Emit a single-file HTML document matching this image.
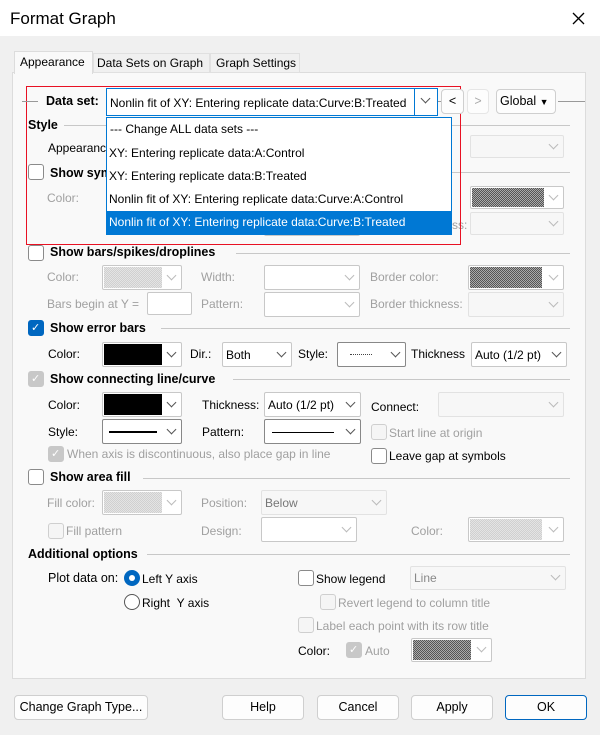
<!DOCTYPE html>
<html><head><style>
*{box-sizing:border-box;margin:0;padding:0}
body{width:600px;height:735px;background:#f0f0f0;font-family:"Liberation Sans",sans-serif;font-size:12px;color:#000;position:relative;overflow:hidden}
div,span{position:absolute}
.t{white-space:nowrap;line-height:14px}
.d{color:#a0a0a0}
.b{font-weight:bold;font-size:12.5px}
.ln{height:1px;background:#c8c8c8}
.cb{width:16px;height:16px;border:1px solid #8a8a8a;border-radius:3px;background:#fff}
.cbd{border-color:#cfcfcf;background:#f5f5f5}
.cbk{background:#0067c0;border-color:#0067c0}
.cbg{background:#c8c8c8;border-color:#c8c8c8}
.ck{left:2px;top:0px;color:#fff;font-size:11px;line-height:14px}
.combo{background:#fff;border:1px solid #c8c8c8;border-radius:2px}
.cdis{background:#f7f7f7;border:1px solid #e2e2e2}
.ar{right:6px;top:50%;margin-top:-6px;width:7px;height:7px;border-right:1px solid #555;border-bottom:1px solid #555;transform:rotate(45deg)}
.ard{border-color:#bbb}
.btn{background:#fdfdfd;border:1px solid #cfcfcf;border-radius:4px;text-align:center;line-height:22px;font-size:12.5px}
.hatch{background:repeating-conic-gradient(#555 0 25%,#aaa 0 50%) 0 0/2px 2px}
.hl{background:repeating-conic-gradient(#e4e4e4 0 25%,#d0d0d0 0 50%) 0 0/2px 2px}
</style></head><body>
<div style="left:0;top:0;width:600px;height:36px;background:#fff"></div>
<div class="t" style="left:10px;top:9px;font-size:17px;line-height:20px">Format Graph</div>
<svg style="position:absolute;left:572px;top:12px" width="13" height="13"><path d="M1 1L12 12M12 1L1 12" stroke="#000" stroke-width="1.3"/></svg>

<div style="left:12px;top:72px;width:574px;height:607px;background:#f9f9f9;border:1px solid #dcdcdc"></div>
<div style="left:14px;top:51px;width:79px;height:23px;background:#f9f9f9;border:1px solid #dcdcdc;border-bottom:none"></div>
<div class="t" style="left:20px;top:55px">Appearance</div>
<div style="left:93px;top:53px;width:117px;height:20px;background:#f0f0f0;border:1px solid #e0e0e0"></div>
<div class="t" style="left:97px;top:56px">Data Sets on Graph</div>
<div style="left:210px;top:53px;width:90px;height:20px;background:#f0f0f0;border:1px solid #e0e0e0"></div>
<div class="t" style="left:216px;top:56px">Graph Settings</div>

<div class="t b" style="left:28px;top:118px">Style</div><div class="ln" style="left:64px;top:125px;width:506px"></div>
<div class="t" style="left:48px;top:141px">Appearance</div>
<div class="combo cdis" style="left:470px;top:135px;width:94px;height:23px"><div class="ar ard"></div></div>
<div class="cb" style="left:28px;top:164px"></div>
<div class="t b" style="left:50px;top:166px">Show sym</div><div class="ln" style="left:452px;top:172px;width:118px"></div>
<div class="t d" style="left:47px;top:191px">Color:</div>
<div class="combo" style="left:470px;top:186px;width:94px;height:23px"><div class="hatch" style="left:1px;top:1px;width:72px;height:19px"></div><div class="ar ard"></div></div>
<div class="t d" style="left:452px;top:218px">ss:</div>
<div class="combo cdis" style="left:470px;top:212px;width:94px;height:23px"><div class="ar ard"></div></div>
<div class="combo" style="left:264px;top:220px;width:96px;height:16px"></div>

<div style="left:26px;top:86px;width:435px;height:159px;border:1.5px solid #e81123"></div>
<div class="ln" style="left:22px;top:101px;width:16px;background:#999"></div>
<div class="t b" style="left:46px;top:94px">Data set:</div>
<div style="left:106px;top:88px;width:332px;height:28px;background:#fff;border:1px solid #0078d4"></div>
<div class="t" style="left:110px;top:96px;width:302px;overflow:hidden">Nonlin fit of XY: Entering replicate data:Curve:B:Treated</div>
<div style="left:414px;top:88px;width:1px;height:28px;background:#0078d4"></div>
<div style="left:422px;top:95px;width:7px;height:7px;border-right:1px solid #555;border-bottom:1px solid #555;transform:rotate(45deg)"></div>
<div class="ln" style="left:438px;top:101px;width:4px;background:#999"></div>
<div class="btn" style="left:441px;top:89px;width:23px;height:25px">&lt;</div>
<div class="btn" style="left:467px;top:89px;width:22px;height:25px;color:#aaa;border-color:#e6e6e6">&gt;</div>
<div class="btn" style="left:496px;top:89px;width:60px;height:25px;text-align:left;padding-left:3px">Global <span style="position:static;font-size:9px">▼</span></div>
<div class="ln" style="left:558px;top:101px;width:27px;background:#999"></div>

<div style="left:106px;top:117px;width:346px;height:118px;background:#fff;border:1px solid #0078d4"></div>
<div class="t" style="left:110px;top:122px">--- Change ALL data sets ---</div>
<div class="t" style="left:109px;top:146px">XY: Entering replicate data:A:Control</div>
<div class="t" style="left:109px;top:169px">XY: Entering replicate data:B:Treated</div>
<div class="t" style="left:109px;top:192px">Nonlin fit of XY: Entering replicate data:Curve:A:Control</div>
<div style="left:107px;top:211px;width:344px;height:23px;background:#0078d4"></div>
<div class="t" style="left:109px;top:215px;color:#fff">Nonlin fit of XY: Entering replicate data:Curve:B:Treated</div>

<div class="cb" style="left:28px;top:245px"></div>
<div class="t b" style="left:50px;top:245px">Show bars/spikes/droplines</div><div class="ln" style="left:236px;top:253px;width:334px"></div>
<div class="t d" style="left:47px;top:270px">Color:</div>
<div class="combo" style="left:102px;top:265px;width:80px;height:25px"><div class="hl" style="left:1px;top:1px;width:58px;height:21px"></div><div class="ar ard"></div></div>
<div class="t d" style="left:201px;top:270px">Width:</div>
<div class="combo" style="left:264px;top:265px;width:96px;height:25px"><div class="ar ard"></div></div>
<div class="t d" style="left:370px;top:270px">Border color:</div>
<div class="combo" style="left:468px;top:265px;width:96px;height:25px"><div class="hatch" style="left:1px;top:1px;width:72px;height:21px"></div><div class="ar ard"></div></div>
<div class="t d" style="left:47px;top:297px">Bars begin at Y =</div>
<div class="combo" style="left:147px;top:292px;width:45px;height:23px"></div>
<div class="t d" style="left:201px;top:297px">Pattern:</div>
<div class="combo" style="left:264px;top:292px;width:96px;height:25px"><div class="ar ard"></div></div>
<div class="t d" style="left:370px;top:297px">Border thickness:</div>
<div class="combo cdis" style="left:468px;top:292px;width:96px;height:25px"><div class="ar ard"></div></div>

<div class="cb cbk" style="left:28px;top:320px"><span class="ck">✓</span></div>
<div class="t b" style="left:50px;top:321px">Show error bars</div><div class="ln" style="left:161px;top:328px;width:409px"></div>
<div class="t" style="left:48px;top:347px">Color:</div>
<div class="combo" style="left:102px;top:342px;width:80px;height:25px"><div style="left:1px;top:1px;width:58px;height:21px;background:#000"></div><div class="ar"></div></div>
<div class="t" style="left:190px;top:347px">Dir.:</div>
<div class="combo" style="left:222px;top:342px;width:70px;height:25px"><span class="t" style="left:3px;top:5px">Both</span><div class="ar"></div></div>
<div class="t" style="left:298px;top:347px">Style:</div>
<div class="combo" style="left:337px;top:342px;width:69px;height:25px;border-color:#888"><div style="left:12px;top:11px;width:22px;height:1px;border-top:1px dotted #444"></div><div class="ar"></div></div>
<div class="t" style="left:411px;top:347px">Thickness</div>
<div class="combo" style="left:471px;top:342px;width:96px;height:25px"><span class="t" style="left:3px;top:5px">Auto (1/2 pt)</span><div class="ar"></div></div>

<div class="cb cbg" style="left:28px;top:371px"><span class="ck">✓</span></div>
<div class="t b" style="left:50px;top:372px">Show connecting line/curve</div><div class="ln" style="left:233px;top:379px;width:337px"></div>
<div class="t" style="left:48px;top:398px">Color:</div>
<div class="combo" style="left:102px;top:392px;width:80px;height:25px"><div style="left:1px;top:1px;width:58px;height:21px;background:#000"></div><div class="ar"></div></div>
<div class="t" style="left:202px;top:398px">Thickness:</div>
<div class="combo" style="left:264px;top:392px;width:97px;height:25px"><span class="t" style="left:3px;top:5px">Auto (1/2 pt)</span><div class="ar"></div></div>
<div class="t" style="left:371px;top:400px">Connect:</div>
<div class="combo cdis" style="left:438px;top:392px;width:126px;height:25px"><div class="ar ard"></div></div>
<div class="t" style="left:48px;top:425px">Style:</div>
<div class="combo" style="left:102px;top:419px;width:80px;height:25px;border-color:#888"><div style="left:6px;top:11px;width:48px;height:2px;background:#000"></div><div class="ar"></div></div>
<div class="t" style="left:202px;top:425px">Pattern:</div>
<div class="combo" style="left:264px;top:419px;width:97px;height:25px;border-color:#888"><div style="left:7px;top:12px;width:62px;height:1px;background:#000"></div><div class="ar"></div></div>
<div class="cb cbd" style="left:371px;top:424px"></div><div class="t d" style="left:389px;top:426px">Start line at origin</div>
<div class="cb cbg" style="left:48px;top:446px"><span class="ck">✓</span></div><div class="t d" style="left:67px;top:447px">When axis is discontinuous, also place gap in line</div>
<div class="cb" style="left:371px;top:448px"></div><div class="t" style="left:389px;top:449px">Leave gap at symbols</div>

<div class="cb" style="left:28px;top:469px"></div>
<div class="t b" style="left:50px;top:470px">Show area fill</div><div class="ln" style="left:143px;top:478px;width:427px"></div>
<div class="t d" style="left:47px;top:496px">Fill color:</div>
<div class="combo" style="left:102px;top:490px;width:80px;height:25px"><div class="hl" style="left:1px;top:1px;width:58px;height:21px"></div><div class="ar ard"></div></div>
<div class="t d" style="left:201px;top:496px">Position:</div>
<div class="combo cdis" style="left:261px;top:490px;width:126px;height:25px"><span class="t" style="left:3px;top:5px;color:#777">Below</span><div class="ar ard"></div></div>
<div class="cb cbd" style="left:48px;top:523px"></div><div class="t d" style="left:66px;top:524px">Fill pattern</div>
<div class="t d" style="left:201px;top:524px">Design:</div>
<div class="combo" style="left:261px;top:517px;width:96px;height:25px"><div class="ar ard"></div></div>
<div class="t d" style="left:411px;top:524px">Color:</div>
<div class="combo" style="left:468px;top:517px;width:96px;height:25px"><div class="hl" style="left:1px;top:1px;width:72px;height:21px"></div><div class="ar ard"></div></div>

<div class="t b" style="left:28px;top:547px">Additional options</div><div class="ln" style="left:147px;top:554px;width:423px"></div>
<div class="t" style="left:48px;top:571px;font-size:12.5px">Plot data on:</div>
<div style="left:124px;top:570px;width:16px;height:16px;border-radius:50%;background:#0067c0"><div style="left:5px;top:5px;width:6px;height:6px;border-radius:50%;background:#fff"></div></div>
<div class="t" style="left:142px;top:572px">Left Y axis</div>
<div style="left:124px;top:594px;width:16px;height:16px;border-radius:50%;border:1px solid #555;background:#fff"></div>
<div class="t" style="left:142px;top:596px">Right &nbsp;Y axis</div>
<div class="cb" style="left:298px;top:570px"></div><div class="t" style="left:316px;top:572px">Show legend</div>
<div class="combo cdis" style="left:410px;top:566px;width:156px;height:24px"><span class="t" style="left:3px;top:4px;color:#888">Line</span><div class="ar ard"></div></div>
<div class="cb cbd" style="left:320px;top:594px"></div><div class="t d" style="left:338px;top:596px">Revert legend to column title</div>
<div class="cb cbd" style="left:298px;top:617px"></div><div class="t d" style="left:316px;top:619px">Label each point with its row title</div>
<div class="t" style="left:298px;top:644px">Color:</div>
<div class="cb cbg" style="left:346px;top:642px"><span class="ck">✓</span></div><div class="t d" style="left:365px;top:644px">Auto</div>
<div class="combo" style="left:411px;top:638px;width:81px;height:24px"><div class="hatch" style="left:1px;top:1px;width:58px;height:20px"></div><div class="ar ard"></div></div>

<div class="btn" style="left:14px;top:695px;width:134px;height:25px">Change Graph Type...</div>
<div class="btn" style="left:222px;top:695px;width:82px;height:25px">Help</div>
<div class="btn" style="left:317px;top:695px;width:82px;height:25px">Cancel</div>
<div class="btn" style="left:411px;top:695px;width:82px;height:25px">Apply</div>
<div class="btn" style="left:505px;top:695px;width:82px;height:25px;border:1.5px solid #0067c0">OK</div>
</body></html>
